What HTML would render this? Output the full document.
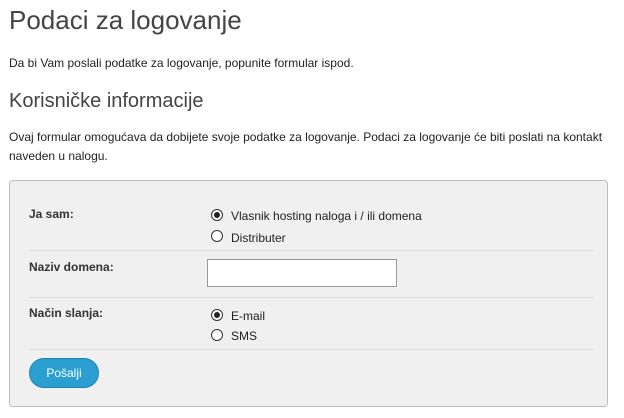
<!DOCTYPE html>
<html><head><meta charset="utf-8"><style>
body{margin:0;background:#fff;font-family:"Liberation Sans",Arial,sans-serif;color:#222;width:624px;height:418px;overflow:hidden;position:relative}
.a{position:absolute;white-space:nowrap}
h1{position:absolute;left:9px;top:5px;margin:0;font-size:26px;font-weight:normal;color:#444}
h2{position:absolute;left:9px;top:90px;margin:0;font-size:20px;font-weight:normal;color:#444}
.p{font-size:12px}
.box{position:absolute;left:9px;top:180px;width:597px;height:225px;background:#f0f0f0;border:1px solid #bdbdbd;border-radius:4px}
.lbl{font-size:12px;font-weight:bold;color:#333}
.r{position:absolute;width:10px;height:10px;border:1px solid #333;border-radius:50%;background:#fff}
.r.on::after{content:"";position:absolute;left:2px;top:2px;width:6px;height:6px;border-radius:50%;background:#222}
.sep{position:absolute;left:29px;width:564px;height:1px;background:#dcdcdc}
.inp{position:absolute;left:207px;top:259px;width:188px;height:26px;background:#fff;border:1px solid #999}
.btn{position:absolute;left:29px;top:358px;width:68px;height:28px;border-radius:15px;background:#2a9fd0;border:1px solid #1f84ad;color:#fff;font-size:12px;text-align:center;line-height:28px}
</style></head><body>
<h1>Podaci za logovanje</h1>
<div class="a p" style="left:9px;top:56px">Da bi Vam poslali podatke za logovanje, popunite formular ispod.</div>
<h2>Korisničke informacije</h2>
<div class="a p" style="left:9px;top:128px;line-height:19px">Ovaj formular omogućava da dobijete svoje podatke za logovanje. Podaci za logovanje će biti poslati na kontakt<br>naveden u nalogu.</div>
<div class="box"></div>
<div class="a lbl" style="left:29px;top:207px">Ja sam:</div>
<div class="r on" style="left:211px;top:209px"></div>
<div class="a p" style="left:231px;top:209px">Vlasnik hosting naloga i / ili domena</div>
<div class="r" style="left:211px;top:230px"></div>
<div class="a p" style="left:231px;top:231px">Distributer</div>
<div class="sep" style="top:250px"></div>
<div class="a lbl" style="left:29px;top:260px">Naziv domena:</div>
<div class="inp"></div>
<div class="sep" style="top:297px"></div>
<div class="a lbl" style="left:29px;top:306px">Način slanja:</div>
<div class="r on" style="left:211px;top:309px"></div>
<div class="a p" style="left:231px;top:309px">E-mail</div>
<div class="r" style="left:211px;top:329px"></div>
<div class="a p" style="left:231px;top:329px">SMS</div>
<div class="sep" style="top:349px"></div>
<div class="btn">Pošalji</div>
</body></html>
